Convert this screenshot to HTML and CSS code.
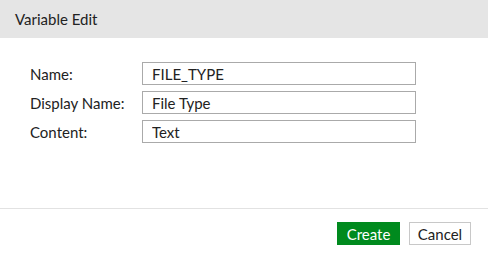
FILE: index.html
```html
<!DOCTYPE html>
<html lang="en">
<head>
    <meta charset="UTF-8">
    <meta name="viewport" content="width=device-width, initial-scale=1.0">
    <title>Variable Edit</title>
    <link rel="stylesheet" href="styles.css">
</head>
<body>
    <div class="dialog">
        <div class="dialog-header">Variable Edit</div>
        <div class="dialog-body">
            <div class="form-row">
                <label class="form-label" for="name">Name:</label>
                <input class="form-input" id="name" type="text" value="FILE_TYPE">
            </div>
            <div class="form-row">
                <label class="form-label" for="display-name">Display Name:</label>
                <input class="form-input" id="display-name" type="text" value="File Type">
            </div>
            <div class="form-row">
                <label class="form-label" for="content">Content:</label>
                <input class="form-input" id="content" type="text" value="Text">
            </div>
        </div>
        <div class="dialog-footer">
            <button class="button create-button">Create</button>
            <button class="button cancel-button">Cancel</button>
        </div>
    </div>
</body>
</html>
```

FILE: styles.css
```css
body {
    margin: 0;
    font-family: Lato, "Liberation Sans", sans-serif;
    font-size: 15px;
    color: #222;
    background-color: #fff;
}
.dialog {
    width: 488px;
    height: 259px;
    display: flex;
    flex-direction: column;
}
.dialog-header {
    height: 38px;
    line-height: 38px;
    padding-left: 15px;
    background-color: #e5e5e5;
    font-size: 15px;
    color: #222;
}
.dialog-body {
    flex: 1;
    padding: 24px 0 0 30px;
}
.form-row {
    display: flex;
    align-items: center;
    margin-bottom: 6px;
}
.form-label {
    width: 112px;
}
.form-input {
    box-sizing: border-box;
    width: 274px;
    height: 23px;
    margin: 0;
    padding: 0 9px;
    border: 1px solid #aaa;
    border-radius: 0;
    font-family: inherit;
    font-size: 15px;
    color: #222;
    outline: none;
}
.dialog-footer {
    height: 51px;
    border-top: 1px solid #e2e2e2;
    display: flex;
    justify-content: flex-end;
    align-items: flex-start;
    padding: 13px 17px 0 0;
    box-sizing: border-box;
}
.button {
    box-sizing: border-box;
    height: 23px;
    padding: 0;
    margin-left: 9px;
    font-family: inherit;
    font-size: 15px;
    border-radius: 0;
    cursor: pointer;
}
.create-button {
    width: 63px;
    background-color: #008a1e;
    border: 1px solid #008a1e;
    color: #fff;
}
.cancel-button {
    width: 62px;
    background-color: #fff;
    border: 1px solid #c8c8c8;
    color: #222;
}
```
